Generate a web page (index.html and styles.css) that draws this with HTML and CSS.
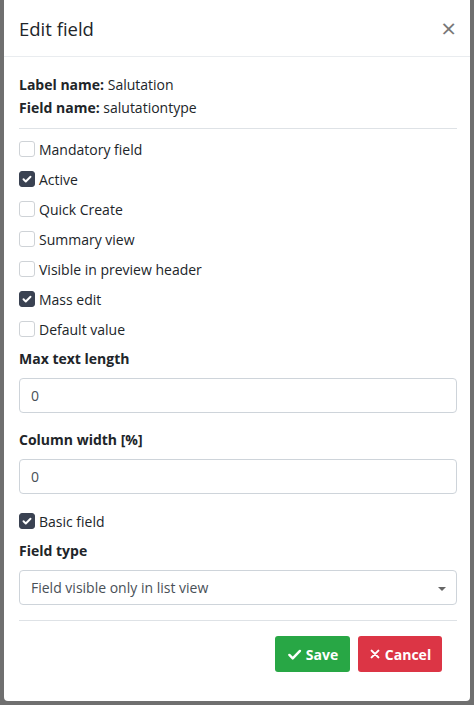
FILE: index.html
```html
<!DOCTYPE html>
<html>
<head>
<meta charset="utf-8">
<link rel="stylesheet" href="styles.css">
</head>
<body>
<div class="modal">
  <div class="modal-header">
    <h5 class="title">Edit field</h5>
    <span class="close">&times;</span>
  </div>
  <div class="modal-body">
    <div class="info"><b>Label name:</b> Salutation</div>
    <div class="info"><b>Field name:</b> salutationtype</div>
    <hr class="sep">
    <div class="check"><span class="box"></span>Mandatory field</div>
    <div class="check"><span class="box on"><svg viewBox="0 0 16 16"><path d="M4 8.3l2.6 2.6L12 5.4" /></svg></span>Active</div>
    <div class="check"><span class="box"></span>Quick Create</div>
    <div class="check"><span class="box"></span>Summary view</div>
    <div class="check"><span class="box"></span>Visible in preview header</div>
    <div class="check"><span class="box on"><svg viewBox="0 0 16 16"><path d="M4 8.3l2.6 2.6L12 5.4" /></svg></span>Mass edit</div>
    <div class="check"><span class="box"></span>Default value</div>
    <label class="lbl">Max text length</label>
    <div class="input">0</div>
    <label class="lbl lbl2">Column width [%]</label>
    <div class="input">0</div>
    <div class="check check-basic"><span class="box on"><svg viewBox="0 0 16 16"><path d="M4 8.3l2.6 2.6L12 5.4" /></svg></span>Basic field</div>
    <label class="lbl">Field type</label>
    <div class="input select">Field visible only in list view<span class="caret"></span></div>
    <hr class="sep sep2">
  </div>
  <div class="modal-footer">
    <button class="btn save"><svg viewBox="0 0 16 16" class="ic"><path d="M2.5 8.5l3.6 3.6L13.8 4.2" /></svg>Save</button>
    <button class="btn cancel"><svg viewBox="0 0 16 16" class="ic ic-x"><path d="M3.5 3.5l9 9M12.5 3.5l-9 9" /></svg>Cancel</button>
  </div>
</div>
</body>
</html>
```
FILE: styles.css
```css
html, body {
  margin: 0;
  padding: 0;
}
body {
  background: #6f6f6f;
  width: 474px;
  height: 705px;
  overflow: hidden;
  font-family: "Open Sans", "Noto Sans", sans-serif;
  color: #212529;
  font-size: 14px;
}
.modal {
  margin-left: 4px;
  width: 466px;
  height: 701px;
  background: #fff;
  border-radius: 0 0 4px 4px;
  box-sizing: border-box;
}
.modal-header {
  height: 57px;
  box-sizing: border-box;
  border-bottom: 1px solid #e9ecef;
  display: flex;
  align-items: center;
  justify-content: space-between;
  padding: 0 14px 0 15px;
}
.title {
  margin: 0;
  font-size: 18.5px;
  font-weight: 400;
  line-height: 1;
  padding-top: 3px;
}
.close {
  font-size: 26px;
  color: #777;
  line-height: 1;
  font-weight: 400;
  padding-bottom: 1px;
}
.modal-body {
  padding: 16px 13px 0 15px;
}
.info {
  line-height: 23px;
}
.info b {
  font-weight: 700;
}
.sep {
  border: 0;
  border-top: 1px solid #dee2e6;
  margin: 9px 0 5px 0;
}
.check {
  display: flex;
  align-items: center;
  height: 30px;
}
.box {
  width: 14px;
  height: 14px;
  border: 1px solid #cfd3d7;
  border-radius: 3px;
  margin-right: 4px;
  margin-top: -1px;
  display: flex;
  align-items: center;
  justify-content: center;
  background: #fff;
}
.box.on {
  background: #3a4252;
  border-color: #3a4252;
}
.box svg {
  width: 14px;
  height: 14px;
  fill: none;
  stroke: #fff;
  stroke-width: 2.2;
  stroke-linecap: round;
  stroke-linejoin: round;
}
.lbl {
  display: block;
  font-weight: 700;
  line-height: 22px;
  margin-top: 4px;
  margin-bottom: 8px;
}
.lbl2 {
  margin-top: 16px;
}
.input {
  height: 35px;
  box-sizing: border-box;
  border: 1px solid #ced4da;
  border-radius: 4px;
  padding: 0 11px;
  display: flex;
  align-items: center;
  color: #495057;
}
.check-basic {
  margin-top: 12px;
}
.select {
  justify-content: space-between;
}
.caret {
  width: 0;
  height: 0;
  border-left: 4px solid transparent;
  border-right: 4px solid transparent;
  border-top: 4px solid #666;
  margin-right: -1px;
  margin-top: 2px;
}
.sep2 {
  margin: 15px 0 0 0;
}
.modal-footer {
  display: flex;
  justify-content: flex-end;
  gap: 8px;
  padding: 15px 28px 0 0;
}
.btn {
  height: 36px;
  border: 0;
  border-radius: 3px;
  color: #fff;
  font-family: "Open Sans", "Noto Sans", sans-serif;
  font-weight: 700;
  font-size: 14px;
  display: flex;
  align-items: center;
  justify-content: center;
  gap: 4px;
  padding: 0 10px;
}
.save {
  background: #28a745;
  width: 75px;
}
.cancel {
  background: #dc3545;
  width: 84px;
}
.ic {
  width: 15px;
  height: 15px;
  fill: none;
  stroke: #fff;
  stroke-width: 2.6;
  stroke-linecap: round;
  stroke-linejoin: round;
}
.ic-x {
  width: 12px;
  height: 12px;
  stroke-width: 2.8;
}
```
